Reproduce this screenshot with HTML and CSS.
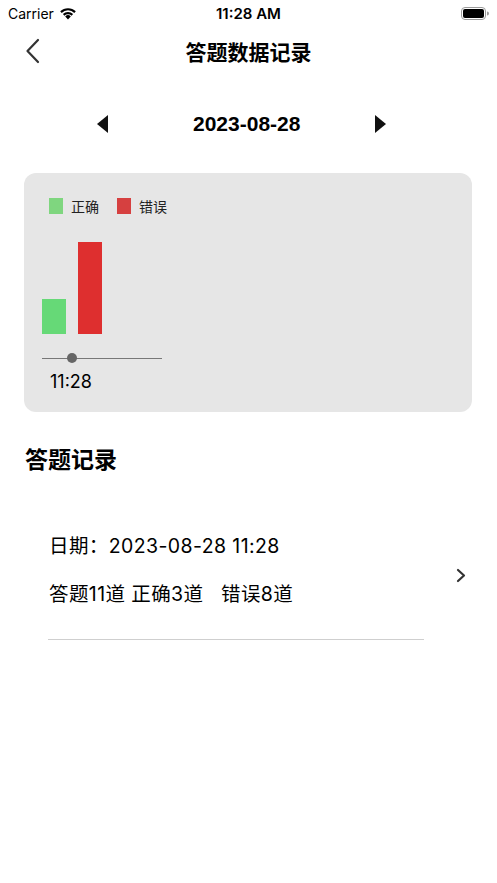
FILE: index.html
```html
<!DOCTYPE html>
<html lang="zh">
<head>
    <meta charset="UTF-8">
    <meta name="viewport" content="width=device-width, initial-scale=1.0">
    <title>答题数据记录</title>
    <link rel="stylesheet" href="styles.css">
</head>
<body>
    <div class="status-bar">
        <div class="status-left">
            <span class="carrier">Carrier</span>
            <svg class="wifi" width="18" height="13" viewBox="0 0 18 13">
                <path d="M9 12.5 L6.2 9.4 A4 4 0 0 1 11.8 9.4 Z" fill="#000"/>
                <path d="M3.9 7.1 A7.4 7.4 0 0 1 14.1 7.1 L12.6 8.7 A5.3 5.3 0 0 0 5.4 8.7 Z" fill="#000"/>
                <path d="M1.2 4.3 A11.2 11.2 0 0 1 16.8 4.3 L15.3 5.9 A9 9 0 0 0 2.7 5.9 Z" fill="#000"/>
            </svg>
        </div>
        <div class="status-time">11:28 AM</div>
        <div class="status-right">
            <svg width="28" height="13" viewBox="0 0 28 13">
                <rect x="0.5" y="0.5" width="24" height="12" rx="3.5" fill="none" stroke="#9a9a9a"/>
                <rect x="2" y="2" width="21" height="9" rx="2" fill="#000"/>
                <path d="M26 4.5 A2 2 0 0 1 26 8.5 Z" fill="#9a9a9a"/>
            </svg>
        </div>
    </div>

    <div class="nav-bar">
        <svg class="nav-back" width="16" height="26" viewBox="0 0 16 26">
            <path d="M13 2 L2.5 13 L13 24" fill="none" stroke="#333" stroke-width="2.2" stroke-linecap="round" stroke-linejoin="round"/>
        </svg>
        <div class="nav-title">答题数据记录</div>
    </div>

    <div class="date-picker">
        <span class="tri tri-left"></span>
        <span class="date-text">2023-08-28</span>
        <span class="tri tri-right"></span>
    </div>

    <div class="chart-card">
        <div class="legend">
            <span class="legend-box green"></span>
            <span class="legend-label">正确</span>
            <span class="legend-box red"></span>
            <span class="legend-label">错误</span>
        </div>
        <div class="bars">
            <div class="bar green-bar" style="height: 35px"></div>
            <div class="bar red-bar" style="height: 92px"></div>
        </div>
        <div class="axis">
            <span class="axis-dot"></span>
        </div>
        <div class="axis-label">11:28</div>
    </div>

    <div class="section-title">答题记录</div>

    <div class="record">
        <div class="record-body">
            <div class="record-date">日期：2023-08-28 11:28</div>
            <div class="record-stats">答题11道 正确3道&nbsp;&nbsp;&nbsp;错误8道</div>
        </div>
        <svg class="record-arrow" width="10" height="15" viewBox="0 0 10 15">
            <path d="M2 2 L8 7.5 L2 13" fill="none" stroke="#333" stroke-width="2.2" stroke-linecap="round" stroke-linejoin="round"/>
        </svg>
    </div>
    <div class="record-line"></div>
</body>
</html>
```

FILE: styles.css
```css
body {
    margin: 0;
    background: #fff;
    color: #000;
    font-family: "Noto Sans CJK SC", "Liberation Sans", sans-serif;
}
.status-bar {
    height: 26px;
    display: flex;
    align-items: center;
    justify-content: space-between;
    padding: 0 8px 0 8px;
    font-family: Inter, "Liberation Sans", sans-serif;
}
.status-left {
    display: flex;
    align-items: center;
    gap: 5px;
    width: 120px;
}
.carrier {
    font-size: 14px;
}
.status-time {
    font-size: 15px;
    font-weight: 600;
}
.status-right {
    width: 120px;
    display: flex;
    justify-content: flex-end;
}
.nav-bar {
    position: relative;
    height: 50px;
    display: flex;
    align-items: center;
    justify-content: center;
}
.nav-back {
    position: absolute;
    left: 25px;
    top: 12px;
}
.nav-title {
    font-size: 21px;
    font-weight: 700;
}
.date-picker {
    margin-top: 24px;
    height: 48px;
    display: flex;
    align-items: center;
    padding-left: 97px;
}
.date-text {
    font-family: "Liberation Sans", sans-serif;
    font-weight: 700;
    font-size: 21px;
    margin: 0 75px 0 85px;
}
.tri {
    width: 0;
    height: 0;
    border-top: 9px solid transparent;
    border-bottom: 9px solid transparent;
}
.tri-left {
    border-right: 11px solid #111;
}
.tri-right {
    border-left: 11px solid #111;
}
.chart-card {
    margin: 25px 25px 0 24px;
    height: 239px;
    background: #e6e6e6;
    border-radius: 12px;
    padding: 0 18px;
    box-sizing: border-box;
}
.legend {
    display: flex;
    align-items: center;
    padding-top: 25px;
    padding-left: 7px;
    height: 16px;
}
.legend-box {
    width: 14px;
    height: 16px;
    margin-right: 8px;
}
.legend-box.green {
    background: #7fd67f;
}
.legend-box.red {
    background: #d64040;
    margin-left: 18px;
}
.legend-label {
    font-size: 14px;
    color: #222;
}
.bars {
    display: flex;
    align-items: flex-end;
    gap: 12px;
    height: 94px;
    padding-top: 26px;
}
.bar {
    width: 24px;
}
.green-bar {
    background: #66d977;
}
.red-bar {
    background: #de2f2f;
}
.axis {
    position: relative;
    width: 120px;
    height: 1px;
    background: #777;
    margin-top: 24px;
}
.axis-dot {
    position: absolute;
    left: 25px;
    top: -5px;
    width: 10px;
    height: 10px;
    border-radius: 50%;
    background: #666;
}
.axis-label {
    font-family: Inter, "Liberation Sans", sans-serif;
    font-size: 18px;
    margin-top: 12px;
    padding-left: 8px;
}
.section-title {
    margin: 29px 0 0 25px;
    font-size: 23px;
    font-weight: 700;
}
.record {
    display: flex;
    align-items: center;
    margin-top: 59px;
    padding: 0 31px 0 49px;
}
.record-body {
    flex: 1;
}
.record-date,
.record-stats {
    font-family: Inter, "Noto Sans CJK SC", sans-serif;
    font-size: 19.5px;
    letter-spacing: 0.4px;
    line-height: 24px;
}
.record-stats {
    margin-top: 24px;
}
.record-arrow {
    margin-top: 10px;
}
.record-line {
    margin: 33px 0 0 48px;
    width: 376px;
    height: 1px;
    background: #cfcfcf;
}
```
